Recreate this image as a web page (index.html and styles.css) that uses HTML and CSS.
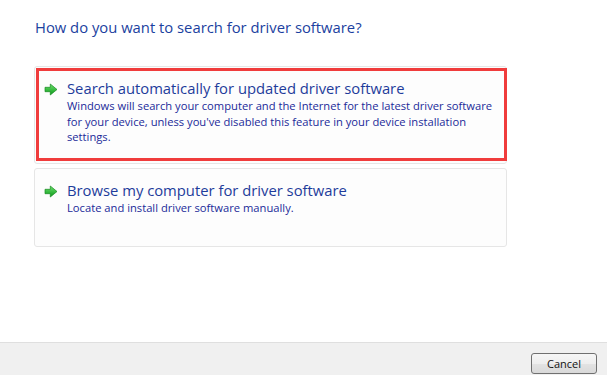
FILE: index.html
```html
<!DOCTYPE html>
<html lang="en">
<head>
    <meta charset="UTF-8">
    <title>Update Driver Software</title>
    <link rel="stylesheet" href="styles.css">
</head>
<body>

    <div class="wizard">
        <div class="content">
            <h1 class="instruction">How do you want to search for driver software?</h1>

            <div class="command-link highlighted">
                <svg class="arrow" width="14" height="13" viewBox="0 0 14 13">
                    <defs>
                        <linearGradient id="g1" x1="0" y1="0" x2="0" y2="1">
                            <stop offset="0" stop-color="#6ee06e"/>
                            <stop offset="1" stop-color="#0a9a18"/>
                        </linearGradient>
                    </defs>
                    <path d="M1 4.3 H6.3 V1 L13 6.5 L6.3 12 V8.7 H1 Z" fill="url(#g1)" stroke="#16891f" stroke-width="0.7"/>
                </svg>
                <div class="link-text">
                    <div class="link-title">Search automatically for updated driver software</div>
                    <div class="link-desc">Windows will search your computer and the Internet for the latest driver software for your device, unless you've disabled this feature in your device installation settings.</div>
                </div>
                <div class="mark"></div>
            </div>

            <div class="command-link">
                <svg class="arrow" width="14" height="13" viewBox="0 0 14 13">
                    <defs>
                        <linearGradient id="g2" x1="0" y1="0" x2="0" y2="1">
                            <stop offset="0" stop-color="#6ee06e"/>
                            <stop offset="1" stop-color="#0a9a18"/>
                        </linearGradient>
                    </defs>
                    <path d="M1 4.3 H6.3 V1 L13 6.5 L6.3 12 V8.7 H1 Z" fill="url(#g2)" stroke="#16891f" stroke-width="0.7"/>
                </svg>
                <div class="link-text">
                    <div class="link-title">Browse my computer for driver software</div>
                    <div class="link-desc">Locate and install driver software manually.</div>
                </div>
            </div>
        </div>

        <div class="footer">
            <button class="btn">Cancel</button>
        </div>
    </div>

</body>
</html>
```

FILE: styles.css
```css
body { margin: 0; padding: 0; background: #fff; font-family: "Open Sans", "Noto Sans", sans-serif; }
.wizard { width: 607px; height: 375px; display: flex; flex-direction: column; }
.content { flex: 1; padding: 17px 0 0 35px; }
.instruction { margin: 0 0 29px 0; font-size: 14.8px; line-height: 20px; font-weight: normal; color: #1b3fa0; }

.command-link { position: relative; display: flex; width: 473px; margin-left: -1px; border: 1px solid #e6e6e6; border-radius: 3px; background: #fdfdfd; padding: 12px 0 0 0; box-sizing: border-box; }
.command-link.highlighted { height: 98px; margin-bottom: 4px; }
.command-link:not(.highlighted) { height: 79px; }
.arrow { margin: 4px 0 0 9px; flex: none; }
.link-text { margin-left: 9px; }
.link-title { font-size: 14.8px; color: #1e3c9b; line-height: 19px; }
.link-desc { font-size: 11.2px; color: #1b2a99; line-height: 15.5px; width: 430px; }

.mark { position: absolute; top: 1px; left: 1px; right: -1px; bottom: 2px; border: 3px solid #f03c3c; }

.footer { height: 32px; background: #f0f0f0; border-top: 1px solid #dfdfdf; display: flex; justify-content: flex-end; align-items: center; padding-right: 10px; }
.btn { width: 66px; height: 21px; font-family: "Open Sans", sans-serif; font-size: 11px; color: #111; border: 1px solid #707070; border-radius: 3px; background: linear-gradient(#f6f6f6 0%, #eeeeee 50%, #e3e3e3 51%, #d9d9d9 100%); padding: 0; margin-top: 9px; }
```
